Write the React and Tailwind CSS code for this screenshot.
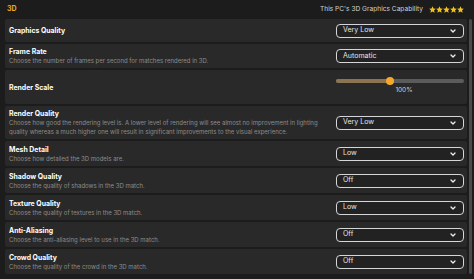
import React from 'react';

const rows = [
  { title: 'Graphics Quality', value: 'Very Low', h: 'h-[23px]' },
  { title: 'Frame Rate', desc: 'Choose the number of frames per second for matches rendered in 3D.', value: 'Automatic', h: 'h-[24px]' },
  { title: 'Render Scale', slider: true, h: 'h-[34px]' },
  {
    title: 'Render Quality',
    desc: 'Choose how good the rendering level is. A lower level of rendering will see almost no improvement in lighting quality whereas a much higher one will result in significant improvements to the visual experience.',
    value: 'Very Low',
    h: 'h-[33px]',
  },
  { title: 'Mesh Detail', desc: 'Choose how detailed the 3D models are.', value: 'Low', h: 'h-[25px]' },
  { title: 'Shadow Quality', desc: 'Choose the quality of shadows in the 3D match.', value: 'Off', h: 'h-[25px]' },
  { title: 'Texture Quality', desc: 'Choose the quality of textures in the 3D match.', value: 'Low', h: 'h-[25px]' },
  { title: 'Anti-Aliasing', desc: 'Choose the anti-aliasing level to use in the 3D match.', value: 'Off', h: 'h-[25px]' },
  { title: 'Crowd Quality', desc: 'Choose the quality of the crowd in the 3D match.', value: 'Off', h: 'h-[25px]' },
];

function Star() {
  return (
    <svg width="7" height="7" viewBox="1 1 22 21">
      <path d="M12 1.5l3.1 6.9 7.4.7-5.6 5 1.7 7.4L12 17.6 5.4 21.5l1.7-7.4-5.6-5 7.4-.7z" fill="#f5c21b" />
    </svg>
  );
}

function Select({ value }) {
  return (
    <div className="w-[128px] h-[14px] shrink-0 rounded-[4px] border-[1.5px] border-[#d6d6d6] bg-[#222] flex items-center justify-between pl-[6px] pr-[7px]">
      <span className="text-[7px] text-[#e4e4e4]">{value}</span>
      <svg width="6" height="4" viewBox="0 0 6 4">
        <path d="M1 1l2 2 2-2" stroke="#eee" strokeWidth="1.3" fill="none" strokeLinecap="round" strokeLinejoin="round" />
      </svg>
    </div>
  );
}

function Slider() {
  return (
    <div className="w-[128px] shrink-0 flex flex-col items-center pt-[1px]">
      <div className="relative w-full h-[4px] rounded-full bg-[#5b5b5b]">
        <div className="h-full w-[42%] rounded-full bg-[#8c7452]" />
        <div className="absolute left-[42%] top-1/2 -translate-x-1/2 -translate-y-1/2 w-[8px] h-[8px] rounded-full bg-[#f5a82a]" />
      </div>
      <span className="text-[6.5px] text-[#cfcfcf] mt-[3px] ml-[8px]">100%</span>
    </div>
  );
}

export default function App() {
  return (
    <div className="w-[474px] h-[279px] bg-[#1c1c1c] flex overflow-hidden font-['Inter',sans-serif]">
      <div className="flex-1 pl-[5px]">
        <div className="h-[19px] flex items-center justify-between pl-[2px] pr-[3px]">
          <span className="text-[7px] font-bold text-[#f2a81d]">3D</span>
          <div className="flex items-center gap-[6px]">
            <span className="text-[6.6px] text-[#d2d2d2]">This PC's 3D Graphics Capability</span>
            <div className="flex gap-[0px]">
              <Star /><Star /><Star /><Star /><Star />
            </div>
          </div>
        </div>
        <div className="flex flex-col gap-[2px]">
          {rows.map((r) => (
            <div key={r.title} className={`${r.h} bg-[#292929] rounded-[2px] flex items-center justify-between pl-[4px] pr-[3px]`}>
              <div className="flex flex-col max-w-[322px]">
                <span className="text-[6.9px] font-bold text-white leading-[9px]">{r.title}</span>
                {r.desc && <span className="text-[6px] text-[#8c8c8c] leading-[9px]">{r.desc}</span>}
              </div>
              {r.slider ? <Slider /> : <Select value={r.value} />}
            </div>
          ))}
        </div>
      </div>
      <div className="w-[7px] pt-[19px] pb-[5px] flex justify-center">
        <div className="w-[3px] h-full rounded-full bg-[#4a4a4a]" />
      </div>
    </div>
  );
}
